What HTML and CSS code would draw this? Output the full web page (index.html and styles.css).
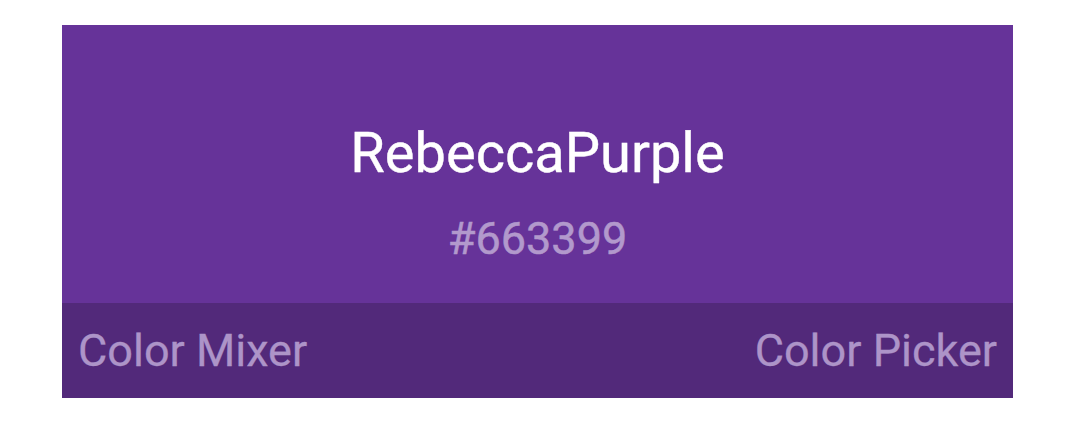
FILE: index.html
```html
<!DOCTYPE html>
<html>
<head>
<meta charset="utf-8">
<link rel="stylesheet" href="styles.css">
</head>
<body>
<div class="card">
  <div class="swatch">
    <div class="name">RebeccaPurple</div>
    <div class="hex">#663399</div>
  </div>
  <div class="actions">
    <span class="action">Color Mixer</span>
    <span class="action">Color Picker</span>
  </div>
</div>
</body>
</html>
```
FILE: styles.css
```css
html, body {
  margin: 0;
  padding: 0;
  background: #ffffff;
}
body {
  font-family: Roboto, "Noto Sans", sans-serif;
  padding: 25px 59px 0 62px;
}
.card {
  width: 951px;
  display: flex;
  flex-direction: column;
}
.swatch {
  height: 278px;
  background: #663399;
  display: flex;
  flex-direction: column;
  align-items: center;
  box-sizing: border-box;
  padding-top: 95px;
}
.name {
  color: #ffffff;
  font-size: 56px;
  line-height: 66px;
  -webkit-text-stroke: 0.4px #ffffff;
}
.hex {
  color: #b299cc;
  font-size: 45px;
  line-height: 54px;
  margin-top: 26px;
  -webkit-text-stroke: 0.5px #b299cc;
}
.actions {
  height: 95px;
  box-sizing: border-box;
  background: #52297a;
  display: flex;
  justify-content: space-between;
  align-items: center;
  padding: 0 16px 0;
}
.action {
  color: #ad94c8;
  font-size: 45px;
  line-height: 54px;
  -webkit-text-stroke: 0.3px #ad94c8;
}
```
